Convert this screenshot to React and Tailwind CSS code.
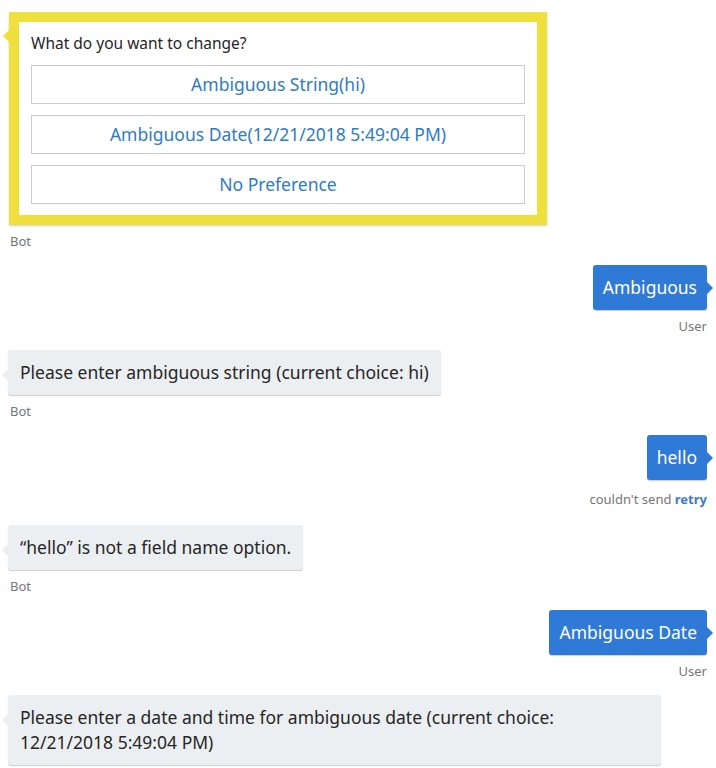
import React from "react";

function BotBubble({ children }) {
  return (
    <div className="relative self-start rounded-[3px] bg-[#eceff1] px-3 py-[10px] text-[17.5px] leading-[25px] text-[#262626] shadow-[0_1px_1px_rgba(0,0,0,0.2)]">
      <span className="absolute left-[-6px] top-[19px] h-0 w-0 border-y-[6px] border-r-[6px] border-y-transparent border-r-[#eceff1]" />
      {children}
    </div>
  );
}

function UserBubble({ children }) {
  return (
    <div className="relative self-end rounded-[3px] bg-[#2f7ad6] px-[10px] py-[10px] text-[17.5px] leading-[25px] text-white shadow-[0_1px_1px_rgba(0,0,0,0.2)]">
      <span className="absolute right-[-6px] top-[17px] h-0 w-0 border-y-[6px] border-l-[6px] border-y-transparent border-l-[#2f7ad6]" />
      {children}
    </div>
  );
}

function Label({ right, retry, children }) {
  return (
    <div
      className={
        "text-[13px] leading-[18px] text-[#767676] " +
        (retry ? "mt-[10px] mb-[17px] " : "mt-[7px] mb-[15px] ") +
        (right ? "self-end" : "self-start pl-[2px]")
      }
    >
      {children}
    </div>
  );
}

const choices = [
  "Ambiguous String(hi)",
  "Ambiguous Date(12/21/2018 5:49:04 PM)",
  "No Preference",
];

export default function App() {
  return (
    <main
      className="min-h-screen bg-white pl-2 pr-[9px] pt-3"
      style={{ fontFamily: '"Noto Sans", "Open Sans", sans-serif' }}
    >
      <div className="flex flex-col">
        <div className="relative ml-px w-[538px] border-[10px] border-[#f0e03e] bg-white px-3 pb-[11px] pt-[11px] shadow-[0_1px_2px_rgba(0,0,0,0.2)]">
          <span className="absolute left-[-16px] top-[8px] h-0 w-0 border-y-[6px] border-r-[6px] border-y-transparent border-r-[#f0e03e]" />
          <p className="text-[15.5px] leading-[21px] text-[#262626]">What do you want to change?</p>
          <div className="mt-[11px] flex flex-col gap-[11px]">
            {choices.map((c) => (
              <button
                key={c}
                className="h-[39px] w-full border border-[#cccccc] bg-white text-[17.5px] text-[#2f7bc4]"
              >
                {c}
              </button>
            ))}
          </div>
        </div>
        <Label>Bot</Label>

        <UserBubble>Ambiguous</UserBubble>
        <Label right>User</Label>

        <BotBubble>Please enter ambiguous string (current choice: hi)</BotBubble>
        <Label>Bot</Label>

        <UserBubble>hello</UserBubble>
        <Label right retry>
          couldn't send <span className="font-bold text-[#3a7cc8]">retry</span>
        </Label>

        <BotBubble>“hello” is not a field name option.</BotBubble>
        <Label>Bot</Label>

        <UserBubble>Ambiguous Date</UserBubble>
        <Label right>User</Label>

        <div className="mr-[46px] self-stretch">
          <BotBubble>
            Please enter a date and time for ambiguous date (current choice:
            <br />
            12/21/2018 5:49:04 PM)
          </BotBubble>
        </div>
      </div>
    </main>
  );
}
